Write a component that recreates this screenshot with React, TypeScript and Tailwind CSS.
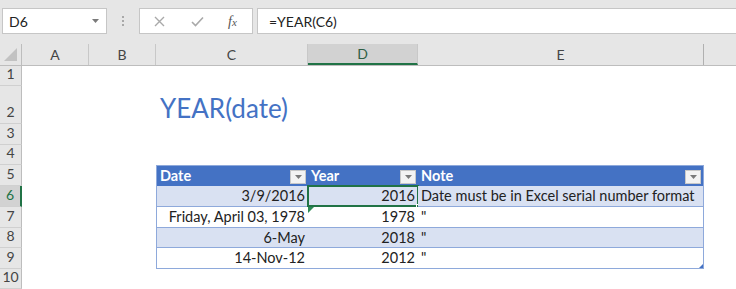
import React from "react";

const font = { fontFamily: "Lato, 'Open Sans', sans-serif" };

function Arrow() {
  return (
    <svg width="7" height="4" viewBox="0 0 7 4">
      <path d="M0 0 L7 0 L3.5 4 Z" fill="#7a7a7a" />
    </svg>
  );
}

function DropBtn() {
  return (
    <div className="absolute right-[2px] top-[4px] w-[16px] h-[14px] bg-[#f3f3f3] border border-[#c8c8c8] flex items-center justify-center">
      <Arrow />
    </div>
  );
}

const widths = { A: 67, B: 67, C: 152, D: 110, E: 286 };

const rowHeights = [20, 38, 21, 20, 21, 21, 21, 20, 21, 20];

export default function App() {
  const data = [
    { c: "3/9/2016", d: "2016", e: "Date must be in Excel serial number format", band: true },
    { c: "Friday, April 03, 1978", d: "1978", e: "\"", band: false },
    { c: "6-May", d: "2018", e: "\"", band: true },
    { c: "14-Nov-12", d: "2012", e: "\"", band: false },
  ];

  const tableCell = (i: number, col: "C" | "D" | "E", content: React.ReactNode, extra = "") => {
    const r = data[i];
    return (
      <div
        className={`relative h-full flex items-center border-b border-[#8ea9db] ${r.band ? "bg-[#d9e1f2]" : "bg-white"} ${extra}`}
        style={{ width: widths[col] }}
      >
        {content}
      </div>
    );
  };

  return (
    <div className="w-[736px] h-[289px] overflow-hidden bg-white text-[#222]" style={font}>
      {/* Formula bar */}
      <div className="h-[44px] bg-[#e6e6e6] flex items-start pt-[8px]">
        <div className="ml-[2px] w-[105px] h-[26px] bg-white border border-[#c6c6c6] flex items-center justify-between pl-[6px] pr-[7px] text-[14px]">
          <span>D6</span>
          <Arrow />
        </div>
        <div className="w-[32px] h-[26px] flex flex-col items-center justify-center gap-[2px]">
          <div className="w-[2px] h-[2px] bg-[#a8a8a8]" />
          <div className="w-[2px] h-[2px] bg-[#a8a8a8]" />
          <div className="w-[2px] h-[2px] bg-[#a8a8a8]" />
        </div>
        <div className="w-[114px] h-[26px] bg-white border border-[#c6c6c6] flex items-center">
          <svg className="ml-[14px]" width="11" height="11" viewBox="0 0 11 11">
            <path d="M1 1 L10 10 M10 1 L1 10" stroke="#a9a9a9" strokeWidth="1.4" />
          </svg>
          <svg className="ml-[26px]" width="13" height="11" viewBox="0 0 13 11">
            <path d="M1 6 L4.5 9.5 L12 1.5" stroke="#a9a9a9" strokeWidth="1.6" fill="none" />
          </svg>
          <span
            className="ml-[24px] text-[14px] italic text-[#555]"
            style={{ fontFamily: "'Liberation Serif', serif" }}
          >
            f<span className="text-[11px]">x</span>
          </span>
        </div>
        <div className="ml-[4px] flex-1 h-[26px] bg-white border border-[#c6c6c6] border-r-0 flex items-center pl-[11px] text-[14px]">
          =YEAR(C6)
        </div>
      </div>

      {/* Column headers */}
      <div className="h-[22px] flex bg-[#e6e6e6] border-b border-[#bdbdbd] text-[14px] text-[#444]">
        <div className="w-[22px] h-full border-r border-[#bdbdbd] flex items-end justify-end pb-[4px] pr-[4px]">
          <svg width="13" height="13" viewBox="0 0 13 13">
            <path d="M13 0 L13 13 L0 13 Z" fill="#c2c2c2" />
          </svg>
        </div>
        {(["A", "B", "C"] as const).map((k) => (
          <div key={k} className="h-full flex items-center justify-center border-r border-[#c8c8c8]" style={{ width: widths[k] }}>
            {k}
          </div>
        ))}
        <div className="h-full flex items-center justify-center bg-[#d2d2d2] border-b-2 border-[#217346] text-[#2f5f45] border-r border-r-[#c8c8c8]" style={{ width: widths.D }}>
          D
        </div>
        <div className="h-full flex items-center justify-center border-r border-[#b0b0b0]" style={{ width: widths.E }}>
          E
        </div>
        <div className="flex-1 h-full" />
      </div>

      {/* Rows */}
      {rowHeights.map((h, idx) => {
        const n = idx + 1;
        const selected = n === 6;
        return (
          <div key={n} className="flex" style={{ height: h }}>
            <div
              className={`w-[22px] h-full flex items-end justify-center pb-[1px] text-[14px] border-b border-[#d0d0d0] ${
                selected
                  ? "bg-[#d2d2d2] text-[#217346] border-r-2 border-r-[#217346]"
                  : "bg-[#e6e6e6] text-[#444] border-r border-r-[#bdbdbd]"
              }`}
            >
              {n}
            </div>
            <div style={{ width: widths.A + widths.B }} className="h-full" />
            {n === 2 && (
              <div className="h-full flex items-end pb-[3px] pl-[4px] text-[26px] leading-none text-[#4472c4] font-normal">
                YEAR(date)
              </div>
            )}
            {n === 5 && (
              <div className="flex h-full bg-[#4472c4] text-white font-bold text-[14.5px] border-t border-[#8ea9db]">
                <div className="relative h-full flex items-center pl-[3px] border-l border-[#8ea9db]" style={{ width: widths.C }}>
                  Date
                  <DropBtn />
                </div>
                <div className="relative h-full flex items-center pl-[3px]" style={{ width: widths.D }}>
                  Year
                  <DropBtn />
                </div>
                <div className="relative h-full flex items-center pl-[3px] border-r border-[#8ea9db]" style={{ width: widths.E }}>
                  Note
                  <DropBtn />
                </div>
              </div>
            )}
            {n >= 6 && n <= 9 && (
              <div className="flex h-full text-[14.5px] text-[#222]">
                {tableCell(n - 6, "C", <span className="ml-auto pr-[3px]">{data[n - 6].c}</span>, "border-l border-l-[#8ea9db]")}
                {tableCell(
                  n - 6,
                  "D",
                  <>
                    <span className="ml-auto pr-[3px]">{data[n - 6].d}</span>
                    {selected && (
                      <>
                        <div className="absolute -left-[1px] -top-[1px] -right-[1px] -bottom-[1px] border-2 border-[#217346]" />
                        <div className="absolute -right-[4px] -bottom-[4px] w-[6px] h-[6px] bg-[#217346] border border-white" />
                      </>
                    )}
                    {n === 7 && (
                      <svg className="absolute left-0 top-0" width="6" height="6" viewBox="0 0 6 6">
                        <path d="M0 0 L6 0 L0 6 Z" fill="#2e8b57" />
                      </svg>
                    )}
                  </>
                )}
                {tableCell(
                  n - 6,
                  "E",
                  <>
                    <span className="pl-[3px]">{data[n - 6].e}</span>
                    {n === 9 && (
                      <svg className="absolute right-0 bottom-0" width="4" height="4" viewBox="0 0 4 4">
                        <path d="M4 0 L4 4 L0 4 Z" fill="#4472c4" />
                      </svg>
                    )}
                  </>,
                  "border-r border-r-[#8ea9db]"
                )}
              </div>
            )}
          </div>
        );
      })}
    </div>
  );
}
